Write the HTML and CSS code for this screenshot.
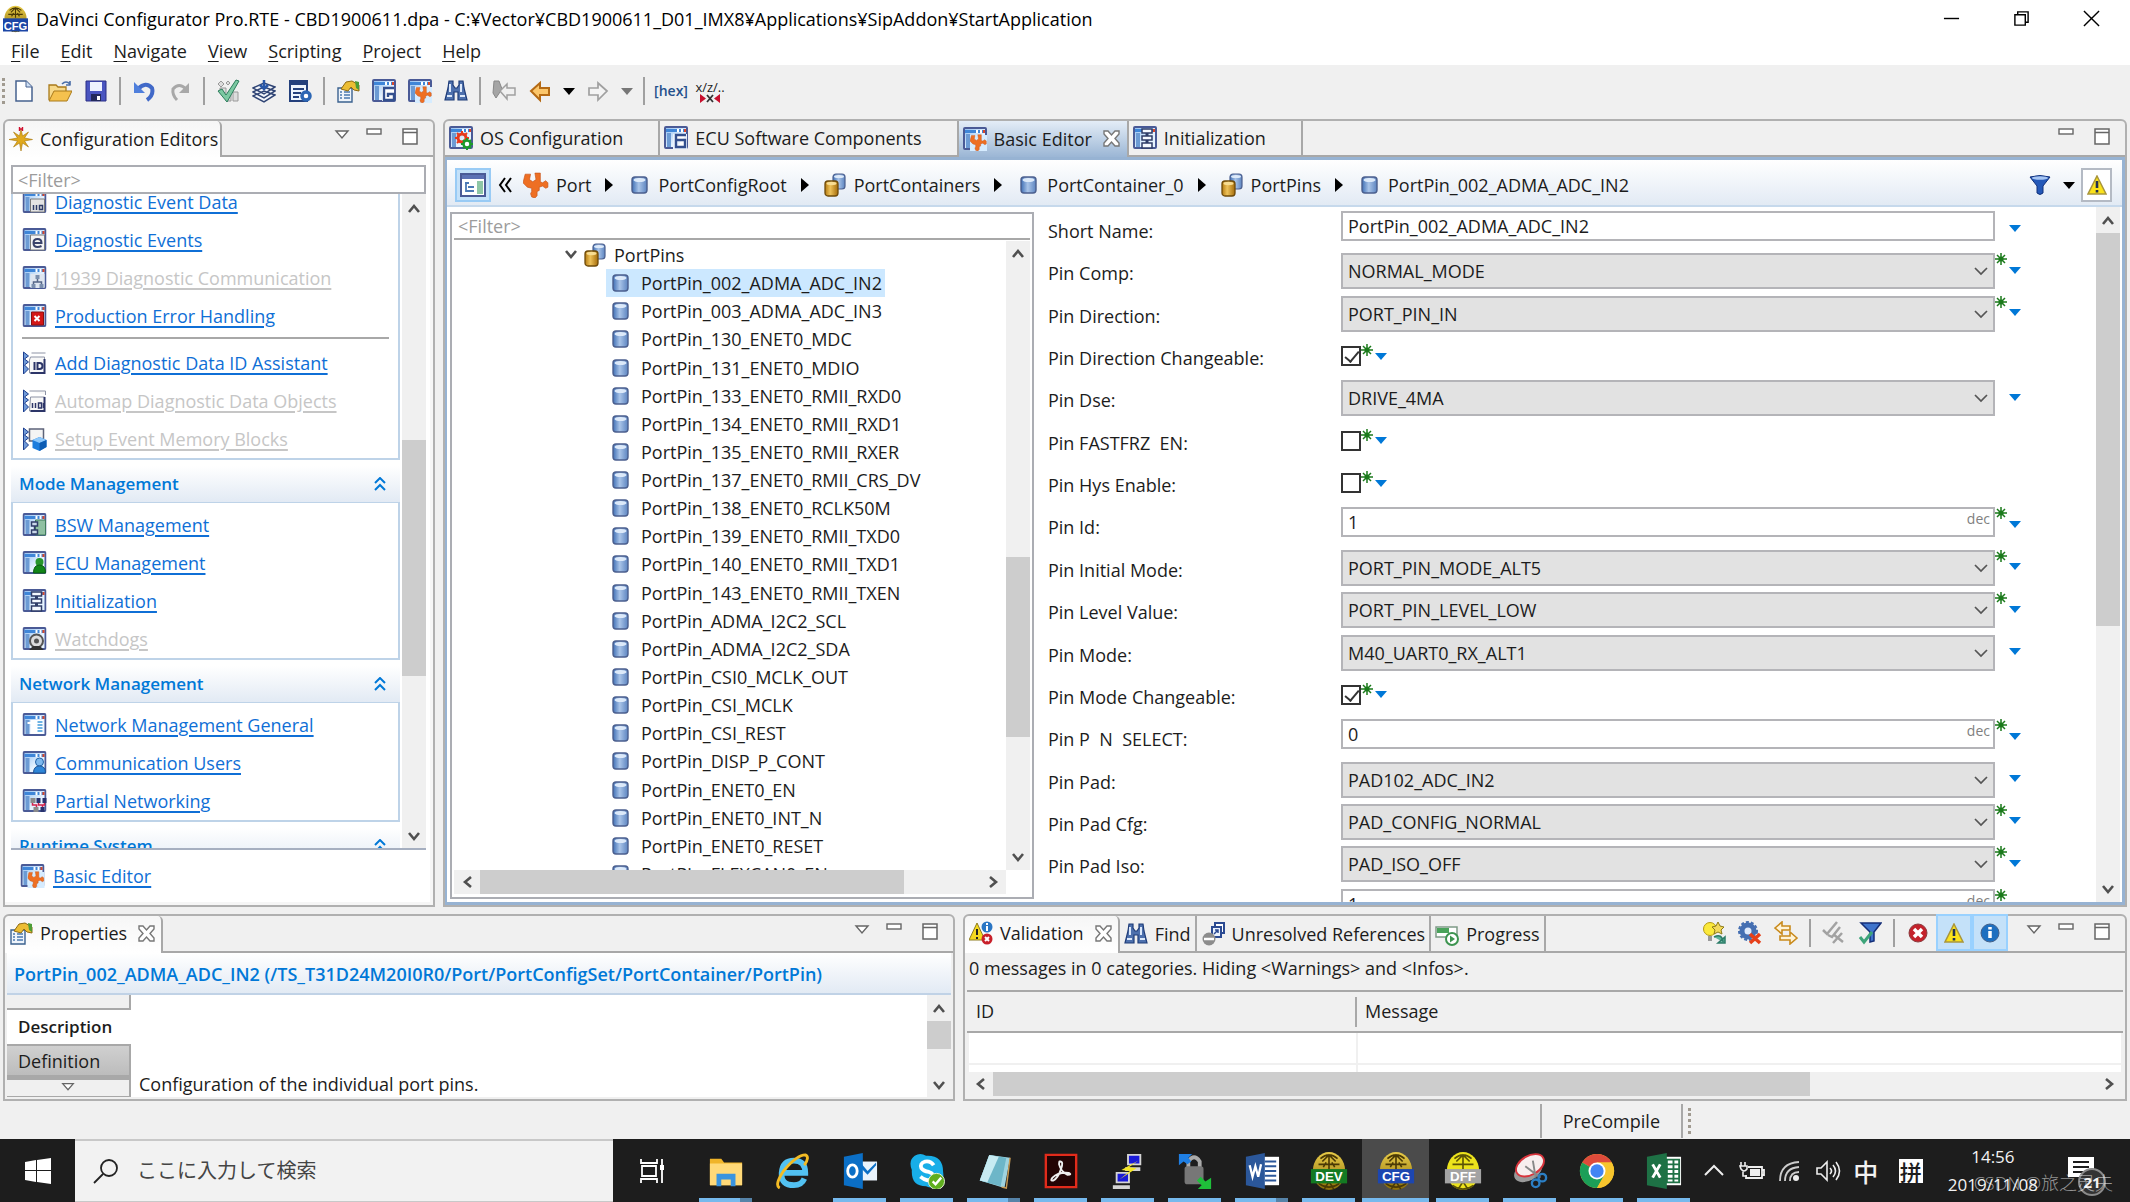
FILE: index.html
```html
<!DOCTYPE html>
<html lang="en">
<head>
    <meta charset="UTF-8">
    <meta name="viewport" content="width=device-width, initial-scale=1.0">
    <title>DaVinci Configurator Pro.RTE - CBD1900611.dpa</title>
    <link rel="stylesheet" href="styles.css">
</head>
<body>
    <!-- Icon sprite -->
    <svg class="sprite" aria-hidden="true">
        <defs>
            <linearGradient id="gBlue" x1="0" x2="1" y1="0" y2="0"><stop offset="0" stop-color="#3f6fb5"/><stop offset="0.45" stop-color="#a9c4e8"/><stop offset="1" stop-color="#5c84c0"/></linearGradient>
            <linearGradient id="gGold" x1="0" x2="1" y1="0" y2="0"><stop offset="0" stop-color="#b47a10"/><stop offset="0.4" stop-color="#eec25a"/><stop offset="1" stop-color="#a56c0a"/></linearGradient>
            <linearGradient id="gWin" x1="0" x2="1" y1="0" y2="1"><stop offset="0" stop-color="#8fbdf0"/><stop offset="0.6" stop-color="#e6f3ff"/></linearGradient>
            <linearGradient id="gDome" x1="0" x2="0" y1="0" y2="1"><stop offset="0" stop-color="#e8cb48"/><stop offset="1" stop-color="#8a6d08"/></linearGradient>
        </defs>
        <symbol id="win" viewBox="0 0 24 24"><rect x="1" y="1" width="22" height="21" rx="1" fill="url(#gWin)" stroke="#4a5a96" stroke-width="2"/><path d="M2 3h20v3H2z" fill="#3f86d8"/><path d="M13 3h2v3h-2zM17 3h2v3h-2z" fill="#fff"/><path d="M20 3h2v3h-2z" fill="#d9482b"/><path d="M3 7h4v14H3z" fill="#6c9bd4"/></symbol>
        <symbol id="i-os" viewBox="0 0 24 24"><use href="#win"/><circle cx="13" cy="12" r="4" fill="none" stroke="#e8391c" stroke-width="3"/><path d="M13 5v3M13 16v3M6 12h3M17 12h3M8 7l2 2M18 7l-2 2M8 17l2-2" stroke="#e8391c" stroke-width="2"/><circle cx="18" cy="18" r="3.500" fill="#fff" stroke="#1c9a2a" stroke-width="2.500"/><path d="M18 12v2M18 22v2M12 18h2M22 18h2M14 14l2 2M22 14l-2 2M14 22l2-2M22 22l-2-2" stroke="#1c9a2a" stroke-width="2"/></symbol>
        <symbol id="i-ecu" viewBox="0 0 24 24"><use href="#win"/><path d="M9 8h14v15H9z" fill="#eaf3fd"/><path d="M22 9h-10v13M12 14h9v7h-9z" fill="#fff" stroke="#34508e" stroke-width="2.400"/></symbol>
        <symbol id="puzzle" viewBox="0 0 24 24"><path d="M2 2h5l-1 5 3 2 3-2-1-6h5v8l2 1 3-2 2 2v4l-2 1-3-2-3 1v3l-2 1v4l-2 2-3-1-1-3 1-2v-3l-4-1-4-4z" fill="#ee6f23" stroke="#c6541a" stroke-width="0.600"/></symbol>
        <symbol id="i-basic" viewBox="0 0 24 24"><use href="#win"/><path d="M7 8h17v16H7z" fill="#d6ecff"/><svg x="7" y="7" width="17" height="17"><use href="#puzzle"/></svg></symbol>
        <symbol id="i-init" viewBox="0 0 24 24"><use href="#win"/><path d="M9 3h10v4H9zM9 10h10v4H9zM9 17h10v5H9z" fill="#f5f9ff" stroke="#2f3d68" stroke-width="1.500"/><path d="M14 7v3M14 14v3" stroke="#2f3d68" stroke-width="3"/></symbol>
        <symbol id="i-data" viewBox="0 0 24 24"><use href="#win"/><path d="M8 9h14v13H8z" fill="#e4e4e4" stroke="#7a7a7a"/><path d="M11 15v5M14 15v5M17 15.500h3v4h-3z" fill="none" stroke="#2f3d68" stroke-width="1.500"/></symbol>
        <symbol id="i-event" viewBox="0 0 24 24"><use href="#win"/><path d="M8 7h14v15H8z" fill="#f4f4f4" stroke="#7a7a7a"/><path d="M11 15h8q0-4-4-4t-4 4 4 4q2 0 4-1" fill="none" stroke="#39426a" stroke-width="2"/></symbol>
        <symbol id="i-comm" viewBox="0 0 24 24"><use href="#win"/><path d="M8 8h14v14H8z" fill="#dfe6f0"/><path d="M13 9h4v4h-4zM9 18h4v4H9zM17 18h4v4h-4z" fill="#7b8fae"/><path d="M15 13v3M11 18v-2h8v2" fill="none" stroke="#556687" stroke-width="1.500"/></symbol>
        <symbol id="i-error" viewBox="0 0 24 24"><use href="#win"/><path d="M9 8h12v13H9z" fill="#d41616" stroke="#8c1010"/><path d="M12 12l5 5M17 12l-5 5" stroke="#fff" stroke-width="2"/></symbol>
        <symbol id="i-assist" viewBox="0 0 24 24"><path d="M9 2h14M8 6h14v16H7V9z" fill="#f8f8f8" stroke="#8d93a5"/><path d="M22 8v14H8" fill="none" stroke="#2c3568" stroke-width="2"/><path d="M1 1l5 4-4 3 4 3-4 3 4 4-5 5z" fill="#6f9ad8" stroke="#1d3f8f"/><path d="M12 11v8M15 12h2q3 0 3 3t-3 3h-2z" fill="none" stroke="#2c3568" stroke-width="2"/></symbol>
        <symbol id="i-automap" viewBox="0 0 24 24"><path d="M7 2h16v4M8 8h14v14H7z" fill="#f8f8f8" stroke="#8d93a5"/><path d="M22 8v14H8" fill="none" stroke="#2c3568" stroke-width="2"/><path d="M1 1l5 4-4 3 4 3-4 3 4 4-5 5z" fill="#6f9ad8" stroke="#1d3f8f"/><path d="M10 14v5M13 14v5M16 14h3v5h-3zM21 14v5" fill="none" stroke="#2c3568" stroke-width="1.500"/></symbol>
        <symbol id="i-blocks" viewBox="0 0 24 24"><path d="M7 2h14v12H7z" fill="#f4f4f4" stroke="#5d6379" stroke-width="1.500"/><path d="M1 1l5 4-4 3 4 3-4 3 4 4-5 5z" fill="#6f9ad8" stroke="#1d3f8f"/><path d="M10 13l7-3 7 3v7l-7 4-7-3z" fill="#1d7ddd"/><path d="M10 13l7 3 7-3-7-3z" fill="#8ec8fb"/><path d="M17 16v8l7-4v-7z" fill="#0c5cb4"/></symbol>
        <symbol id="i-bsw" viewBox="0 0 24 24"><use href="#win"/><path d="M13 7h10v15H13z" fill="#8fc0a2" stroke="#3f7a5a"/><path d="M9 9h6v4H9zM9 17h6v4H9zM12 13v4" fill="#c9d7e8" stroke="#2f3d68" stroke-width="1.500"/></symbol>
        <symbol id="i-user-g" viewBox="0 0 24 24"><use href="#win"/><circle cx="17" cy="11" r="4" fill="#27962c"/><path d="M11 22q0-8 6-8t6 8z" fill="#128618" stroke="#0b5c10"/></symbol>
        <symbol id="i-user-b" viewBox="0 0 24 24"><use href="#win"/><circle cx="17" cy="11" r="4" fill="#7db8ee" stroke="#2363a8"/><path d="M11 22q0-7 6-7t6 7z" fill="#2f86d8" stroke="#1c5596"/></symbol>
        <symbol id="i-watch" viewBox="0 0 24 24"><use href="#win"/><circle cx="14" cy="14" r="6.500" fill="#ddd" stroke="#555" stroke-width="2"/><circle cx="14" cy="14" r="2.500" fill="#555"/><path d="M9 22l2-2h6l2 2z" stroke="#333" stroke-width="2"/></symbol>
        <symbol id="i-general" viewBox="0 0 24 24"><use href="#win"/><path d="M8 7h13v14H8z" fill="#fff"/><path d="M15 9h5M15 12h5M15 15h5M15 18h5" stroke="#3f9bdc" stroke-width="1.500"/><path d="M5 10h6" stroke="#fff" stroke-width="2"/></symbol>
        <symbol id="i-partial" viewBox="0 0 24 24"><use href="#win"/><path d="M8 9h5v5H8zM11 18h5v5h-5z" fill="#8a8a8a"/><path d="M14 9h4v5h-4zM20 9h4v5h-4zM18 18h4v5h-4z" fill="#28326e"/><path d="M10 14v2h4v2M16 14v2h6v-2M20 16v2" fill="none" stroke="#d3214a" stroke-width="1.500"/></symbol>
        <symbol id="i-star" viewBox="0 0 24 24"><path d="M12 2l1.500 7 6-4-4 6 8 1.500-8 1.500 4 6-6-4L12 24l-1.500-8-6 4 4-6L0 12.500l8.500-1.500-4-6 6 4z" fill="#e0a91c" stroke="#a87608" stroke-width="0.600"/><path d="M10.500 0v4M13.500 0v4M10 2h4" stroke="#d01030" stroke-width="1.400"/></symbol>
        <symbol id="cyl" viewBox="0 0 17 18"><rect x="1" y="1" width="15" height="16" rx="3" fill="url(#gBlue)" stroke="#4b5f8e" stroke-width="1.400"/><ellipse cx="8.500" cy="4" rx="6" ry="2" fill="#dce9f9"/></symbol>
        <symbol id="cyls" viewBox="0 0 22 24"><g transform="translate(8 0)"><rect x="1" y="1" width="12" height="15" rx="3" fill="url(#gBlue)" stroke="#4b5f8e" stroke-width="1.200"/><ellipse cx="7" cy="3.500" rx="5" ry="1.600" fill="#dce9f9"/></g><rect x="1" y="8" width="13" height="15" rx="3" fill="url(#gGold)" stroke="#6f4b0a" stroke-width="1.300"/><ellipse cx="7.500" cy="10.500" rx="5" ry="1.700" fill="#f7dc92"/></symbol>
        <symbol id="chev-d" viewBox="0 0 12 12"><path d="M1 2l5 6 5-6" fill="none" stroke="#505050" stroke-width="2.600"/></symbol>
        <symbol id="chev-u" viewBox="0 0 12 12"><path d="M1 10l5-6 5 6" fill="none" stroke="#505050" stroke-width="2.600"/></symbol>
        <symbol id="chev-l" viewBox="0 0 12 12"><path d="M10 1L4 6l6 5" fill="none" stroke="#505050" stroke-width="2.600"/></symbol>
        <symbol id="chev-r" viewBox="0 0 12 12"><path d="M2 1l6 5-6 5" fill="none" stroke="#505050" stroke-width="2.600"/></symbol>
        <symbol id="chev-thin" viewBox="0 0 14 9"><path d="M1 1l6 6 6-6" fill="none" stroke="#555" stroke-width="1.700"/></symbol>
        <symbol id="collapse" viewBox="0 0 12 14"><path d="M1 6l5-5 5 5M1 13l5-5 5 5" fill="none" stroke="#0078d7" stroke-width="2"/></symbol>
        <symbol id="tri" viewBox="0 0 12 7"><path d="M0 0h12L6 7z"/></symbol>
        <symbol id="tri-r" viewBox="0 0 8 14"><path d="M0 0l8 7-8 7z" fill="#000"/></symbol>
        <symbol id="mark" viewBox="0 0 12 12"><path d="M6 0v12M0 6h12M2 2l8 8M10 2l-8 8" stroke="#1b7a1b" stroke-width="1.500"/><circle cx="6" cy="6" r="2.500" fill="#1b7a1b"/></symbol>
        <symbol id="v-menu" viewBox="0 0 16 18"><path d="M2 4h12l-6 7z" fill="#fff" stroke="#666" stroke-width="1.400"/></symbol>
        <symbol id="v-min" viewBox="0 0 16 18"><rect x="1" y="2" width="14" height="5" fill="#fff" stroke="#666" stroke-width="1.400"/></symbol>
        <symbol id="v-max" viewBox="0 0 16 18"><path d="M1 2h14v15H1zM1 5.500h14" fill="#fff" stroke="#666" stroke-width="1.500"/></symbol>
        <symbol id="close" viewBox="0 0 17 17"><path d="M1 1h4l3.500 4L12 1h4v3l-4 4.500 4 4.500v3h-4l-3.500-4L5 16H1v-3l4-4.500L1 4z" fill="#fff" stroke="#777" stroke-width="1.400"/></symbol>
        <symbol id="warn" viewBox="0 0 20 20"><path d="M10 1l9 18H1z" fill="#fbe21a" stroke="#a9963c" stroke-width="1.500"/><path d="M10 6v7M10 15v2.500" stroke="#23314f" stroke-width="2.600"/></symbol>
        <symbol id="props" viewBox="0 0 24 24"><path d="M2 9h14v14H2z" fill="#eef4fb" stroke="#3b618f" stroke-width="1.400"/><path d="M4 13h2M8 13h6M4 16h2M8 16h6M4 19h2M8 19h6" stroke="#4a78b0" stroke-width="1.500"/><path d="M5 10l5-7 6-1 7 4v6l-5-1-3-3-3 4z" fill="#ecbd33" stroke="#8e6a13"/><path d="M19 2l4 1v8l-3-2z" fill="#4d9c35"/></symbol>
        <symbol id="binoc" viewBox="0 0 24 24"><path d="M5 2h4v4l2 3h2l2-3V2h4l1 7 3 12h-9v-8h-4v8H1L4 9z" fill="#4d70ad" stroke="#1f3c78" stroke-width="1.200"/><path d="M3 17h5M16 17h5M6 5v8M17 5v8" stroke="#dbe8fa" stroke-width="2"/></symbol>
        <symbol id="dome" viewBox="0 0 38 42"><ellipse cx="19" cy="21" rx="17" ry="20" fill="url(#gDome)"/><path d="M10 8q9-8 18 0M8 14h22M12 11l7-7 7 7M19 5v14M8 34q11 8 22 0M14 40l5-8 5 8M13 17l3-5M25 17l-3-5" fill="none" stroke="#4a3905" stroke-width="1.700"/></symbol>
    </svg>

    <header>
        <div class="titlebar">
            <svg class="app-icon" viewBox="0 0 38 42"><use href="#dome"/><rect y="20" width="38" height="20" fill="#1c46a6"/><text x="19" y="37" class="badge-text" text-anchor="middle">CFG</text></svg>
            <span>DaVinci Configurator Pro.RTE - CBD1900611.dpa - C:¥Vector¥CBD1900611_D01_IMX8¥Applications¥SipAddon¥StartApplication</span>
            <div class="win-buttons">
                <button aria-label="Minimize"><svg viewBox="0 0 18 18"><path d="M1 9h16" stroke="#000" stroke-width="1.500"/></svg></button>
                <button aria-label="Restore"><svg viewBox="0 0 18 18"><path d="M2 5h11v11H2zM5 5V2h11v11h-3" fill="none" stroke="#000" stroke-width="1.500"/></svg></button>
                <button aria-label="Close"><svg viewBox="0 0 18 18"><path d="M1 1l16 16M17 1L1 17" stroke="#000" stroke-width="1.500"/></svg></button>
            </div>
        </div>
        <nav class="menubar">
            <button><u>F</u>ile</button>
            <button><u>E</u>dit</button>
            <button><u>N</u>avigate</button>
            <button><u>V</u>iew</button>
            <button><u>S</u>cripting</button>
            <button><u>P</u>roject</button>
            <button><u>H</u>elp</button>
        </nav>
    </header>

    <div class="toolbar">
        <span class="grip"></span>
        <button aria-label="New"><svg viewBox="0 0 24 24"><path d="M4 2h10l6 6v14H4z" fill="#fff" stroke="#46618f" stroke-width="1.500"/><path d="M14 2v6h6" fill="#cfe0f5" stroke="#46618f"/></svg></button>
        <button aria-label="Open"><svg viewBox="0 0 24 24"><path d="M1 21V6h7l2 2h8v4" fill="#f7d98a" stroke="#a97a1b" stroke-width="1.300"/><path d="M1 22l5-10h18l-5 10z" fill="#f5c14e" stroke="#a97a1b"/><path d="M14 5q4-4 8 0v-3m0 4h-4" fill="none" stroke="#4b6fa8" stroke-width="1.600"/></svg></button>
        <button aria-label="Save"><svg viewBox="0 0 24 24"><path d="M2 2h20v20H2z" fill="#4a55c0" stroke="#2b2f86"/><path d="M6 3h12v9H6z" fill="#eef2ff"/><path d="M7 15h10v7H7z" fill="#23295c"/><path d="M13 17h3v4h-3z" fill="#fff"/></svg></button>
        <span class="sep"></span>
        <button aria-label="Undo"><svg viewBox="0 0 24 24"><path d="M6 10q8-8 14-1 2 7-5 12" fill="none" stroke="#4169c8" stroke-width="4"/><path d="M2 3v11h11z" fill="#4f7fdc"/></svg></button>
        <button aria-label="Redo"><svg viewBox="0 0 24 24"><path d="M18 10q-7-7-13 0-1 6 4 11" fill="none" stroke="#a8a8a8" stroke-width="3"/><path d="M21 4v10H11z" fill="#a8a8a8"/></svg></button>
        <span class="sep"></span>
        <button aria-label="Validate"><svg viewBox="0 0 24 24"><path d="M5 2l3 3-3 3-3-3zM12 2l2 2-2 2-2-2zM4 9h6v5H4zM17 13h5v9h-5zM10 16h5v6h-5z" fill="#ddd" stroke="#999"/><path d="M2 12l4-2 4 6L20 1l3 1-12 21z" fill="#7cc9a2" stroke="#2c7c5b"/></svg></button>
        <button aria-label="Generate"><svg viewBox="0 0 24 24"><path d="M1 17l11-5 11 4-11 7zM1 13l11-5 11 4-11 7zM1 9l11-5 11 4-11 7z" fill="#f3f6fb" stroke="#2f4474" stroke-width="1.500"/><path d="M12 1v8m-4-3l4 4 4-4" fill="none" stroke="#2757a8" stroke-width="2.500"/></svg></button>
        <button aria-label="Options"><svg viewBox="0 0 24 24"><path d="M2 2h17v20H2z" fill="#eef4fc" stroke="#24407c" stroke-width="2"/><path d="M2 2h17v4H2z" fill="#24407c"/><path d="M5 10h11M5 14h8M5 18h6" stroke="#24407c" stroke-width="2"/><circle cx="18" cy="17" r="4" fill="#fff" stroke="#2c66b4" stroke-width="3.500"/></svg></button>
        <span class="sep"></span>
        <button aria-label="Properties"><svg><use href="#props"/></svg></button>
        <button aria-label="Configuration editor"><svg viewBox="0 0 24 24"><use href="#win"/><path d="M10 8h12v14H10z" fill="#fff"/><path d="M22 9H12v12h10v-6h-6v3" fill="none" stroke="#34508e" stroke-width="2.400"/></svg></button>
        <button aria-label="Basic editor"><svg><use href="#i-basic"/></svg></button>
        <button aria-label="Find"><svg><use href="#binoc"/></svg></button>
        <span class="sep"></span>
        <button aria-label="Last edit"><svg viewBox="0 0 24 24"><path d="M2 2h5l3 8-6 9-3-5z" fill="#a5a5a5" stroke="#888"/><path d="M8 12l7-7v4h8v7h-8v4z" fill="#f0f0f0" stroke="#a0a0a0" stroke-width="1.500"/></svg></button>
        <button aria-label="Back"><svg viewBox="0 0 24 24"><path d="M3 12l9-8v5h9v7h-9v5z" fill="#fbc66b" stroke="#b56a14" stroke-width="2"/></svg></button>
        <button class="drop" aria-label="Back history"><svg><use href="#tri"/></svg></button>
        <button aria-label="Forward"><svg viewBox="0 0 24 24"><path d="M21 12l-9-8v5H3v7h9v5z" fill="#f4f4f4" stroke="#a0a0a0" stroke-width="1.700"/></svg></button>
        <button class="drop dim" aria-label="Forward history"><svg><use href="#tri"/></svg></button>
        <span class="sep"></span>
        <button class="hex" aria-label="Hex">[hex]</button>
        <button class="xyz" aria-label="Short paths"><span>x/z/..</span><svg viewBox="0 0 20 9"><path d="M0 0l6 4.500L0 9zM20 0l-6 4.500 6 4.500z" fill="#c8102e"/><path d="M7 1l6 7M13 1L7 8" stroke="#333" stroke-width="1.800"/></svg></button>
    </div>

    <main class="workbench">
        <section class="pane editors">
            <div class="tabbar">
                <div class="tab active"><svg><use href="#i-star"/></svg>Configuration Editors</div>
                <div class="view-tools">
                    <button class="vm" aria-label="View menu"><svg><use href="#v-menu"/></svg></button>
                    <button aria-label="Minimize"><svg><use href="#v-min"/></svg></button>
                    <button aria-label="Maximize"><svg><use href="#v-max"/></svg></button>
                </div>
            </div>
            <div class="editors-body">
                <input class="filter" type="text" placeholder="&lt;Filter&gt;" aria-label="Filter editors">
                <div class="scroller">
                    <div class="groups">
                        <div class="group first">
                            <a href="#"><svg><use href="#i-data"/></svg><span>Diagnostic Event Data</span></a>
                            <a href="#"><svg><use href="#i-event"/></svg><span>Diagnostic Events</span></a>
                            <a href="#" class="off"><svg><use href="#i-comm"/></svg><span>J1939 Diagnostic Communication</span></a>
                            <a href="#"><svg><use href="#i-error"/></svg><span>Production Error Handling</span></a>
                            <hr>
                            <a href="#"><svg><use href="#i-assist"/></svg><span>Add Diagnostic Data ID Assistant</span></a>
                            <a href="#" class="off"><svg><use href="#i-automap"/></svg><span>Automap Diagnostic Data Objects</span></a>
                            <a href="#" class="off"><svg><use href="#i-blocks"/></svg><span>Setup Event Memory Blocks</span></a>
                        </div>
                        <h2>Mode Management<svg><use href="#collapse"/></svg></h2>
                        <div class="group">
                            <a href="#"><svg><use href="#i-bsw"/></svg><span>BSW Management</span></a>
                            <a href="#"><svg><use href="#i-user-g"/></svg><span>ECU Management</span></a>
                            <a href="#"><svg><use href="#i-init"/></svg><span>Initialization</span></a>
                            <a href="#" class="off"><svg><use href="#i-watch"/></svg><span>Watchdogs</span></a>
                        </div>
                        <h2>Network Management<svg><use href="#collapse"/></svg></h2>
                        <div class="group">
                            <a href="#"><svg><use href="#i-general"/></svg><span>Network Management General</span></a>
                            <a href="#"><svg><use href="#i-user-b"/></svg><span>Communication Users</span></a>
                            <a href="#"><svg><use href="#i-partial"/></svg><span>Partial Networking</span></a>
                        </div>
                        <h2>Runtime System<svg><use href="#collapse"/></svg></h2>
                    </div>
                    <div class="sb-v sb-editors"><svg><use href="#chev-u"/></svg><i></i><svg><use href="#chev-d"/></svg></div>
                </div>
                <a href="#" class="basic-link"><svg><use href="#i-basic"/></svg><span>Basic Editor</span></a>
            </div>
        </section>

        <section class="pane editor">
            <div class="tabbar">
                <div class="tab spare"><svg><use href="#i-os"/></svg>OS Configuration</div>
                <div class="tab spare"><svg><use href="#i-ecu"/></svg>ECU Software Components</div>
                <div class="tab current"><svg><use href="#i-basic"/></svg>Basic Editor<button aria-label="Close tab"><svg><use href="#close"/></svg></button></div>
                <div class="tab spare"><svg><use href="#i-init"/></svg>Initialization</div>
                <div class="view-tools">
                    <button aria-label="Minimize"><svg><use href="#v-min"/></svg></button>
                    <button aria-label="Maximize"><svg><use href="#v-max"/></svg></button>
                </div>
            </div>
            <div class="editor-body">
                <div class="crumbs">
                    <button class="toggle" aria-label="Show tree"><svg viewBox="0 0 26 24"><rect x="1" y="1" width="24" height="22" fill="#fff" stroke="#4a5a96" stroke-width="2"/><path d="M2 2h22v4H2z" fill="#5c71b4"/><path d="M17 8h6v13h-6z" fill="#8fc7a6"/><path d="M5 10h4M8 14h6M8 18h6M6 10v8h3" fill="none" stroke="#4b79b5" stroke-width="1.800"/></svg></button>
                    <svg class="back" viewBox="0 0 14 16"><path d="M7 1L2 8l5 7M13 1L8 8l5 7" fill="none" stroke="#000" stroke-width="2"/></svg>
                    <svg class="puzzle"><use href="#puzzle"/></svg><span>Port</span>
                    <svg class="arrow"><use href="#tri-r"/></svg><svg class="node"><use href="#cyl"/></svg><span>PortConfigRoot</span>
                    <svg class="arrow"><use href="#tri-r"/></svg><svg class="nodes"><use href="#cyls"/></svg><span>PortContainers</span>
                    <svg class="arrow"><use href="#tri-r"/></svg><svg class="node"><use href="#cyl"/></svg><span>PortContainer_0</span>
                    <svg class="arrow"><use href="#tri-r"/></svg><svg class="nodes"><use href="#cyls"/></svg><span>PortPins</span>
                    <svg class="arrow"><use href="#tri-r"/></svg><svg class="node"><use href="#cyl"/></svg><span>PortPin_002_ADMA_ADC_IN2</span>
                    <div class="crumb-tools">
                        <button aria-label="Filter"><svg class="funnel" viewBox="0 0 22 20"><path d="M1 2q10-3 20 0l-7 9v7q-3 3-6 0v-7z" fill="#2458b8" stroke="#12307a"/><ellipse cx="11" cy="3" rx="8" ry="1.800" fill="#a7c6f4"/></svg></button>
                        <button class="drop" aria-label="Filter menu"><svg><use href="#tri"/></svg></button>
                        <button class="warn-btn" aria-label="Warnings"><svg><use href="#warn"/></svg></button>
                    </div>
                </div>
                <div class="editor-split">
                    <div class="tree">
                        <input type="text" placeholder="&lt;Filter&gt;" aria-label="Filter tree">
                        <div class="tree-view">
                            <div class="tree-clip">
                                <ul>
                                    <li class="parent"><svg class="twisty"><use href="#chev-d"/></svg><svg class="nodes"><use href="#cyls"/></svg>PortPins</li>
                                    <li><span class="selected"><svg><use href="#cyl"/></svg>PortPin_002_ADMA_ADC_IN2</span></li>
                                    <li><span><svg><use href="#cyl"/></svg>PortPin_003_ADMA_ADC_IN3</span></li>
                                    <li><span><svg><use href="#cyl"/></svg>PortPin_130_ENET0_MDC</span></li>
                                    <li><span><svg><use href="#cyl"/></svg>PortPin_131_ENET0_MDIO</span></li>
                                    <li><span><svg><use href="#cyl"/></svg>PortPin_133_ENET0_RMII_RXD0</span></li>
                                    <li><span><svg><use href="#cyl"/></svg>PortPin_134_ENET0_RMII_RXD1</span></li>
                                    <li><span><svg><use href="#cyl"/></svg>PortPin_135_ENET0_RMII_RXER</span></li>
                                    <li><span><svg><use href="#cyl"/></svg>PortPin_137_ENET0_RMII_CRS_DV</span></li>
                                    <li><span><svg><use href="#cyl"/></svg>PortPin_138_ENET0_RCLK50M</span></li>
                                    <li><span><svg><use href="#cyl"/></svg>PortPin_139_ENET0_RMII_TXD0</span></li>
                                    <li><span><svg><use href="#cyl"/></svg>PortPin_140_ENET0_RMII_TXD1</span></li>
                                    <li><span><svg><use href="#cyl"/></svg>PortPin_143_ENET0_RMII_TXEN</span></li>
                                    <li><span><svg><use href="#cyl"/></svg>PortPin_ADMA_I2C2_SCL</span></li>
                                    <li><span><svg><use href="#cyl"/></svg>PortPin_ADMA_I2C2_SDA</span></li>
                                    <li><span><svg><use href="#cyl"/></svg>PortPin_CSI0_MCLK_OUT</span></li>
                                    <li><span><svg><use href="#cyl"/></svg>PortPin_CSI_MCLK</span></li>
                                    <li><span><svg><use href="#cyl"/></svg>PortPin_CSI_REST</span></li>
                                    <li><span><svg><use href="#cyl"/></svg>PortPin_DISP_P_CONT</span></li>
                                    <li><span><svg><use href="#cyl"/></svg>PortPin_ENET0_EN</span></li>
                                    <li><span><svg><use href="#cyl"/></svg>PortPin_ENET0_INT_N</span></li>
                                    <li><span><svg><use href="#cyl"/></svg>PortPin_ENET0_RESET</span></li>
                                    <li><span><svg><use href="#cyl"/></svg>PortPin_FLEXCAN0_EN</span></li>
                                </ul>
                            </div>
                            <div class="sb-v sb-tree"><svg><use href="#chev-u"/></svg><i></i><svg><use href="#chev-d"/></svg></div>
                        </div>
                        <div class="sb-h sb-tree-h"><svg><use href="#chev-l"/></svg><i></i><svg><use href="#chev-r"/></svg></div>
                    </div>
                    <div class="form-clip">
                        <form>
                            <div class="row"><label for="f0">Short Name:</label><div class="field"><input id="f0" type="text" value="PortPin_002_ADMA_ADC_IN2"></div><span class="mark"></span><button type="button" class="menu" aria-label="Menu"><svg><use href="#tri"/></svg></button></div>
                            <div class="row"><label for="f1">Pin Comp:</label><div class="field"><select id="f1"><option>NORMAL_MODE</option></select><svg class="caret"><use href="#chev-thin"/></svg></div><svg class="mark"><use href="#mark"/></svg><button type="button" class="menu" aria-label="Menu"><svg><use href="#tri"/></svg></button></div>
                            <div class="row"><label for="f2">Pin Direction:</label><div class="field"><select id="f2"><option>PORT_PIN_IN</option></select><svg class="caret"><use href="#chev-thin"/></svg></div><svg class="mark"><use href="#mark"/></svg><button type="button" class="menu" aria-label="Menu"><svg><use href="#tri"/></svg></button></div>
                            <div class="row check"><label for="f3">Pin Direction Changeable:</label><input id="f3" type="checkbox" checked><svg class="mark"><use href="#mark"/></svg><button type="button" class="menu" aria-label="Menu"><svg><use href="#tri"/></svg></button></div>
                            <div class="row"><label for="f4">Pin Dse:</label><div class="field"><select id="f4"><option>DRIVE_4MA</option></select><svg class="caret"><use href="#chev-thin"/></svg></div><span class="mark"></span><button type="button" class="menu" aria-label="Menu"><svg><use href="#tri"/></svg></button></div>
                            <div class="row check"><label for="f5">Pin FASTFRZ&nbsp; EN:</label><input id="f5" type="checkbox"><svg class="mark"><use href="#mark"/></svg><button type="button" class="menu" aria-label="Menu"><svg><use href="#tri"/></svg></button></div>
                            <div class="row check"><label for="f6">Pin Hys Enable:</label><input id="f6" type="checkbox"><svg class="mark"><use href="#mark"/></svg><button type="button" class="menu" aria-label="Menu"><svg><use href="#tri"/></svg></button></div>
                            <div class="row"><label for="f7">Pin Id:</label><div class="field"><input id="f7" type="text" value="1"><small>dec</small></div><svg class="mark"><use href="#mark"/></svg><button type="button" class="menu" aria-label="Menu"><svg><use href="#tri"/></svg></button></div>
                            <div class="row"><label for="f8">Pin Initial Mode:</label><div class="field"><select id="f8"><option>PORT_PIN_MODE_ALT5</option></select><svg class="caret"><use href="#chev-thin"/></svg></div><svg class="mark"><use href="#mark"/></svg><button type="button" class="menu" aria-label="Menu"><svg><use href="#tri"/></svg></button></div>
                            <div class="row"><label for="f9">Pin Level Value:</label><div class="field"><select id="f9"><option>PORT_PIN_LEVEL_LOW</option></select><svg class="caret"><use href="#chev-thin"/></svg></div><svg class="mark"><use href="#mark"/></svg><button type="button" class="menu" aria-label="Menu"><svg><use href="#tri"/></svg></button></div>
                            <div class="row"><label for="f10">Pin Mode:</label><div class="field"><select id="f10"><option>M40_UART0_RX_ALT1</option></select><svg class="caret"><use href="#chev-thin"/></svg></div><span class="mark"></span><button type="button" class="menu" aria-label="Menu"><svg><use href="#tri"/></svg></button></div>
                            <div class="row check"><label for="f11">Pin Mode Changeable:</label><input id="f11" type="checkbox" checked><svg class="mark"><use href="#mark"/></svg><button type="button" class="menu" aria-label="Menu"><svg><use href="#tri"/></svg></button></div>
                            <div class="row"><label for="f12">Pin P&nbsp; N&nbsp; SELECT:</label><div class="field"><input id="f12" type="text" value="0"><small>dec</small></div><svg class="mark"><use href="#mark"/></svg><button type="button" class="menu" aria-label="Menu"><svg><use href="#tri"/></svg></button></div>
                            <div class="row"><label for="f13">Pin Pad:</label><div class="field"><select id="f13"><option>PAD102_ADC_IN2</option></select><svg class="caret"><use href="#chev-thin"/></svg></div><span class="mark"></span><button type="button" class="menu" aria-label="Menu"><svg><use href="#tri"/></svg></button></div>
                            <div class="row"><label for="f14">Pin Pad Cfg:</label><div class="field"><select id="f14"><option>PAD_CONFIG_NORMAL</option></select><svg class="caret"><use href="#chev-thin"/></svg></div><svg class="mark"><use href="#mark"/></svg><button type="button" class="menu" aria-label="Menu"><svg><use href="#tri"/></svg></button></div>
                            <div class="row"><label for="f15">Pin Pad Iso:</label><div class="field"><select id="f15"><option>PAD_ISO_OFF</option></select><svg class="caret"><use href="#chev-thin"/></svg></div><svg class="mark"><use href="#mark"/></svg><button type="button" class="menu" aria-label="Menu"><svg><use href="#tri"/></svg></button></div>
                            <div class="row"><label for="f16">Pin Pow Ov:</label><div class="field"><input id="f16" type="text" value="1"><small>dec</small></div><svg class="mark"><use href="#mark"/></svg><button type="button" class="menu" aria-label="Menu"><svg><use href="#tri"/></svg></button></div>
                        </form>
                    </div>
                    <div class="sb-v sb-form"><svg><use href="#chev-u"/></svg><i></i><svg><use href="#chev-d"/></svg></div>
                </div>
            </div>
        </section>
    </main>

    <div class="views">
        <section class="pane properties">
            <div class="tabbar">
                <div class="tab active"><svg><use href="#props"/></svg>Properties<button aria-label="Close tab"><svg><use href="#close"/></svg></button></div>
                <div class="view-tools">
                    <button class="vm" aria-label="View menu"><svg><use href="#v-menu"/></svg></button>
                    <button aria-label="Minimize"><svg><use href="#v-min"/></svg></button>
                    <button aria-label="Maximize"><svg><use href="#v-max"/></svg></button>
                </div>
            </div>
            <h3>PortPin_002_ADMA_ADC_IN2 (/TS_T31D24M20I0R0/Port/PortConfigSet/PortContainer/PortPin)</h3>
            <div class="props-body">
                <div class="side-tabs">
                    <span class="stub"></span>
                    <button class="on">Description</button>
                    <button>Definition</button>
                    <button class="more" aria-label="More tabs"><svg><use href="#v-menu"/></svg></button>
                </div>
                <p>Configuration of the individual port pins.</p>
                <div class="sb-v sb-props"><svg><use href="#chev-u"/></svg><i></i><svg><use href="#chev-d"/></svg></div>
            </div>
        </section>

        <section class="pane validation">
            <div class="tabbar">
                <div class="tab active"><svg viewBox="0 0 24 24"><path d="M8 2l8 17H0z" fill="#f5d91e" stroke="#8d7c20"/><path d="M8 8v6M8 16v2" stroke="#222" stroke-width="2"/><circle cx="18" cy="6" r="5.500" fill="#2a76c4"/><path d="M18 5v5M18 2v2" stroke="#fff" stroke-width="2"/><circle cx="18" cy="18" r="5.500" fill="#c8202a"/><path d="M16 16l4 4M20 16l-4 4" stroke="#fff" stroke-width="2"/></svg>Validation<button aria-label="Close tab"><svg><use href="#close"/></svg></button></div>
                <div class="tab"><svg><use href="#binoc"/></svg>Find</div>
                <div class="tab"><svg viewBox="0 0 24 24"><path d="M14 1h9v10h-9z" fill="#fff" stroke="#2b4a92" stroke-width="2"/><path d="M11 5h9v10h-9z" fill="#eaf1fc" stroke="#2b4a92" stroke-width="2"/><path d="M13 12l4-4m0 3V8h-3" fill="none" stroke="#2b4a92" stroke-width="1.500"/><circle cx="8" cy="17" r="6.500" fill="#8c8c8c"/><path d="M3 17h10" stroke="#fff" stroke-width="2.500"/></svg>Unresolved References</div>
                <div class="tab"><svg viewBox="0 0 24 24"><path d="M1 5h21v10H1z" fill="#fff" stroke="#7d9a86" stroke-width="1.500"/><path d="M2 6h12v5H2z" fill="#4aa35b"/><circle cx="17" cy="17" r="6" fill="#fff" stroke="#3d9450" stroke-width="2"/><path d="M15 13.500l5 3.500-5 3.500z" fill="#3d9450"/></svg>Progress</div>
                <div class="view-tools actions">
                    <button class="act" aria-label="Solve"><svg viewBox="0 0 24 24"><circle cx="8" cy="8" r="6.500" fill="#fbe93b" stroke="#b59a12"/><path d="M6 15h4v5H6z" fill="#999"/><path d="M16 1l2 4 4 1-3 3 1 4-4-2-4 2 1-4-3-3 4-1z" fill="#f3d95a" stroke="#8c7a18"/><path d="M12 16q8-4 9 5m-5 1h7v-6z" fill="#5cb39a" stroke="#2c7c68" stroke-width="1.500"/></svg></button>
                    <button class="act" aria-label="Cancel solving"><svg viewBox="0 0 24 24"><circle cx="10" cy="10" r="6" fill="#dfeafb" stroke="#456fb2" stroke-width="5"/><circle cx="10" cy="10" r="9" fill="none" stroke="#456fb2" stroke-width="2" stroke-dasharray="3 2"/><path d="M12 13l10 9M22 13l-10 9" stroke="#e6401a" stroke-width="3.500"/></svg></button>
                    <button class="act" aria-label="Synchronize"><svg viewBox="0 0 24 24"><path d="M1 7l7-6v4h8v4H8v4z" fill="#fff3d6" stroke="#c98a1c" stroke-width="1.600"/><path d="M23 17l-7-6v4H6v4h10v4z" fill="#fff3d6" stroke="#c98a1c" stroke-width="1.600"/></svg></button>
                    <span class="sep"></span>
                    <button class="act" aria-label="Acknowledge"><svg viewBox="0 0 24 24"><path d="M1 9l4 4L15 1M6 14l4 2 8-10M11 13l10 8M20 12l-9 10" fill="none" stroke="#a2a2a2" stroke-width="2.500"/></svg></button>
                    <button class="act" aria-label="Filter by selection"><svg viewBox="0 0 24 24"><path d="M3 2h20l-7 9v9l-4 1V11z" fill="#3f74cc" stroke="#142e78" stroke-width="1.500"/><path d="M2 16l4 5 8-10" fill="none" stroke="#3da479" stroke-width="3"/></svg></button>
                    <span class="sep"></span>
                    <button class="act" aria-label="Errors"><svg viewBox="0 0 24 24"><circle cx="12" cy="12" r="9" fill="#c4222b" stroke="#8c3b3f"/><path d="M8 8l8 8M16 8l-8 8" stroke="#fff" stroke-width="3.500"/></svg></button>
                    <button class="act on" aria-label="Warnings"><svg viewBox="-2 -2 24 24"><use href="#warn" width="20" height="20"/></svg></button>
                    <button class="act on" aria-label="Infos"><svg viewBox="0 0 24 24"><circle cx="12" cy="12" r="9" fill="#1d6fc0" stroke="#44618a"/><path d="M12 10v7M12 6v2.500" stroke="#fff" stroke-width="3.500"/></svg></button>
                    <button class="vm" aria-label="View menu"><svg><use href="#v-menu"/></svg></button>
                    <button aria-label="Minimize"><svg><use href="#v-min"/></svg></button>
                    <button aria-label="Maximize"><svg><use href="#v-max"/></svg></button>
                </div>
            </div>
            <p class="summary">0 messages in 0 categories. Hiding &lt;Warnings&gt; and &lt;Infos&gt;.</p>
            <div class="table-clip">
                <table>
                    <thead><tr><th>ID</th><th>Message</th></tr></thead>
                    <tbody><tr><td></td><td></td></tr><tr><td></td><td></td></tr></tbody>
                </table>
            </div>
            <div class="sb-h sb-table"><svg><use href="#chev-l"/></svg><i></i><svg><use href="#chev-r"/></svg></div>
        </section>
    </div>

    <div class="statusbar">
        <span class="variant">PreCompile</span>
        <span class="grip"></span>
    </div>

    <footer class="taskbar">
        <button class="start" aria-label="Start"><svg viewBox="0 0 26 26"><path d="M0 4l11-2v10H0zM12 2l14-2v12H12zM0 13h11v11L0 22zM12 13h14v13l-14-2z" fill="#fff"/></svg></button>
        <label class="search"><svg viewBox="0 0 26 26"><circle cx="16" cy="10" r="8" fill="none" stroke="#222" stroke-width="1.800"/><path d="M10 16l-9 9" stroke="#222" stroke-width="1.800"/></svg><input type="text" lang="ja" placeholder="ここに入力して検索" aria-label="Search"></label>
        <button class="task-view" aria-label="Task view"><svg viewBox="0 0 26 26"><path d="M2 8h14v10H2zM1 1v4h16V1M1 25v-4h16v4M22 1v24" fill="none" stroke="#fff" stroke-width="1.800"/><path d="M20 7h4v5h-4z" fill="#fff"/></svg></button>
        <div class="apps">
            <button class="run many" aria-label="Explorer"><svg viewBox="0 0 38 38"><path d="M2 6h12l3 4h19v24H2z" fill="#f0b429"/><path d="M2 11h34v23H2z" fill="#ffd978"/><path d="M9 35V22h20v13h-5v-7H14v7z" fill="#3a94df"/></svg></button>
            <button aria-label="Internet Explorer"><svg viewBox="0 0 38 38"><path d="M8 21h24q0-13-12-13T7 21t13 13q8 0 11-7" fill="none" stroke="#52c1f2" stroke-width="6"/><path d="M5 37Q-1 34 9 19 23 2 32 2q5 2-1 11" fill="none" stroke="#f3bb24" stroke-width="3"/></svg></button>
            <button class="run" aria-label="Outlook"><svg viewBox="0 0 38 38"><path d="M20 9h17v20H20z" fill="#e9f3fc"/><path d="M21 12l6 7 9-9v3l-9 10-6-6z" fill="#0b6fc6"/><path d="M2 4l20-4v38L2 34z" fill="#0b6fc6"/><ellipse cx="11" cy="19" rx="5" ry="6.500" fill="none" stroke="#fff" stroke-width="3"/></svg></button>
            <button class="run" aria-label="Skype"><svg viewBox="0 0 38 38"><path d="M6 3q6-4 12 0 18-1 18 17 2 12-8 16-6 1-10-1Q2 35 3 18-1 8 6 3z" fill="#18aee8"/><path d="M26 13q-3-5-9-4-6 2-4 7 2 3 8 4 6 2 4 6-5 6-13-1" fill="none" stroke="#fff" stroke-width="4"/><circle cx="29" cy="30" r="8.500" fill="#5fae1e" stroke="#e8f4d8"/><path d="M25 30l3 3 6-7" fill="none" stroke="#fff" stroke-width="2.500"/></svg></button>
            <button class="run many" aria-label="Notepad"><svg viewBox="0 0 38 38"><path d="M14 2l22 3-6 32-26-8z" fill="#9fd3df"/><path d="M14 2l18 3-6 30-22-6z" fill="#6db6c8"/><path d="M14 2l10 2L12 31l-8-2z" fill="#c7ebf2"/><path d="M36 5l-4 32-5-1" fill="none" stroke="#c79a54" stroke-width="1.500"/></svg></button>
            <button class="run" aria-label="Acrobat"><svg viewBox="0 0 38 38"><path d="M3 2h32v34H3z" fill="#230404" stroke="#e32b1b" stroke-width="2.500"/><path d="M18 9q4 0 1 8-3 9-8 12-4 1-1-3 6-6 17-5 4 2-1 2-7-3-9-11 0-4 1-3z" fill="none" stroke="#eee" stroke-width="2"/></svg></button>
            <button class="run" aria-label="PuTTY"><svg viewBox="0 0 38 38"><path d="M18 1h15v12H18zM16 15h16v4H16zM6 20h15v12H6zM3 34h18v4H3z" fill="#d4d4d4"/><path d="M20 3h11v8H20zM8 22h11v8H8z" fill="#1a1ad8"/><path d="M30 8L12 18l9 1-11 9 18-12-8-1z" fill="#f5e625"/></svg></button>
            <button class="run" aria-label="Transfer lock"><svg viewBox="0 0 38 38"><path d="M12 16V9q6-9 12 0v7" fill="none" stroke="#aaa" stroke-width="4"/><rect x="8" y="14" width="20" height="19" rx="3" fill="#777"/><path d="M2 1h14l-4 4 3 4-4 3-4-3-5 4z" fill="#1f7fe4"/><path d="M36 38H22l4-4-5-5 4-4 5 5 6-4z" fill="#1fbf3a"/></svg></button>
            <button class="run many" aria-label="Word"><svg viewBox="0 0 38 38"><path d="M20 4h17v30H20z" fill="#fff"/><path d="M22 9h12M22 14h12M22 19h12M22 24h12M22 29h12" stroke="#2b579a" stroke-width="2"/><path d="M2 4l20-4v38L2 34z" fill="#2b579a"/><path d="M6 13l3 12 3-11 3 11 3-13" fill="none" stroke="#fff" stroke-width="2.400"/></svg></button>
            <button class="run davinci" aria-label="DaVinci Developer"><svg viewBox="0 0 38 42"><use href="#dome"/><rect y="19" width="38" height="15" fill="#137a22"/><text x="19" y="32" class="badge-text small" text-anchor="middle">DEV</text></svg></button>
            <button class="run davinci front" aria-label="DaVinci Configurator"><svg viewBox="0 0 38 42"><use href="#dome"/><rect y="19" width="38" height="15" fill="#1c46b0"/><text x="19" y="32" class="badge-text small" text-anchor="middle">CFG</text></svg></button>
            <button class="run davinci" aria-label="DaVinci Diff"><svg viewBox="0 0 38 42"><ellipse cx="19" cy="21" rx="17" ry="20" fill="#ece31c"/><path d="M10 8q9-8 18 0M8 14h22M12 11l7-7 7 7M19 5v14M8 36q11 8 22 0M14 40l5-8 5 8" fill="none" stroke="#5a5206" stroke-width="1.700"/><rect y="19" width="38" height="15" fill="#a3a3a3"/><text x="19" y="32" class="badge-text small" text-anchor="middle">DFF</text></svg></button>
            <button class="run" aria-label="Snipping Tool"><svg viewBox="0 0 38 38"><ellipse cx="17" cy="19" rx="16" ry="10" transform="rotate(-30 17 19)" fill="#9a9a9a"/><ellipse cx="19" cy="13" rx="16" ry="10" transform="rotate(-30 19 13)" fill="#f7eeee" stroke="#d8343c" stroke-width="2"/><path d="M22 8l3 18M14 14l16 12" stroke="#888" stroke-width="2"/><circle cx="25" cy="32" r="4" fill="none" stroke="#2b7fc4" stroke-width="2.500"/><circle cx="32" cy="26" r="4" fill="none" stroke="#2b7fc4" stroke-width="2.500"/></svg></button>
            <button class="run" aria-label="Chrome"><svg viewBox="0 0 38 38"><circle cx="19" cy="19" r="18" fill="#f7c52d"/><path d="M19 19L3.400 10A18 18 0 0 1 34.600 10H19z" fill="#de4b3b"/><path d="M3.400 10A18 18 0 0 0 19 37l8-14-8-4z" fill="#1c9f58"/><path d="M19 10h15.600L27 23z" fill="#f7c52d"/><path d="M34.600 10A18 18 0 0 1 19 37l8-14z" fill="#f7c52d"/><circle cx="19" cy="19" r="9" fill="#fff"/><circle cx="19" cy="19" r="7" fill="#4285f4"/></svg></button>
            <button class="run" aria-label="Excel"><svg viewBox="0 0 38 38"><path d="M20 4h17v30H20z" fill="#fff"/><path d="M22 7h13v24H22zM22 12h13M22 17h13M22 22h13M22 27h13M29 7v24" fill="none" stroke="#1e7145" stroke-width="2"/><path d="M1 4l21-4v38L1 34z" fill="#1e7145"/><path d="M7 12l8 14M15 12L7 26" stroke="#fff" stroke-width="3"/></svg></button>
        </div>
        <div class="tray">
            <svg viewBox="0 0 26 26"><path d="M4 17l9-9 9 9" fill="none" stroke="#eee" stroke-width="2"/></svg>
            <svg viewBox="0 0 26 26"><path d="M9 9h14v11H7v-3M23 12h2v5h-2" fill="none" stroke="#eee" stroke-width="1.800"/><path d="M11 11h10v7H11z" fill="#eee"/><path d="M2 4v4M6 4v4M1 8h7v3q-3 4-6 0zM4 12v6h4" fill="none" stroke="#eee" stroke-width="1.600"/></svg>
            <svg viewBox="0 0 26 26"><path d="M3 23Q3 5 22 4M8 23Q8 10 22 9M13 23q0-9 9-9" fill="none" stroke="#ccc" stroke-width="1.800"/><circle cx="19" cy="20" r="3" fill="#eee"/></svg>
            <svg viewBox="0 0 26 26"><path d="M2 10h4l6-6v18l-6-6H2zM15 10q3 3 0 6M18 7q5 6 0 12M21 4q7 9 0 18" fill="none" stroke="#eee" stroke-width="1.600"/></svg>
            <span class="ime">中</span>
            <span class="ime box">拼</span>
            <div class="clock"><span>14:56</span><span>2019/11/08</span></div>
            <button class="notify" aria-label="Notifications"><svg viewBox="0 0 26 28"><path d="M0 0h26v20h-9l-6 7v-7H0z" fill="#fff"/><path d="M5 5h16M5 10h16M5 15h10" stroke="#1d1d1d" stroke-width="2"/></svg><b>21</b></button>
        </div>
        <span class="watermark">CSDN @旅之灵夫</span>
    </footer>
</body>
</html>
```

FILE: styles.css
```css
* {
    box-sizing: border-box;
}

body {
    margin: 0;
    height: 100vh;
    display: flex;
    flex-direction: column;
    overflow: hidden;
    background-color: #f0f0f0;
    color: #1c1c1c;
    font-family: "Open Sans", "Noto Sans CJK JP", sans-serif;
    font-size: 18px;
    line-height: 24px;
}

button {
    font: inherit;
    color: inherit;
    background: none;
    border: none;
    padding: 0;
    display: flex;
    align-items: center;
    justify-content: center;
}

input,
select {
    font: inherit;
    color: inherit;
}

svg {
    flex: none;
    display: block;
}

.sprite {
    position: absolute;
    width: 0;
    height: 0;
}

.badge-text {
    font: bold 17px "Liberation Sans", sans-serif;
    fill: #fff;
}

.badge-text.small {
    font-size: 14px;
}

/* Title and menu */
header {
    background-color: #fff;
}

.titlebar {
    display: flex;
    align-items: center;
    height: 37px;
    padding-left: 3px;
    color: #000;
}

.app-icon {
    width: 25px;
    height: 28px;
    margin-right: 8px;
}

.win-buttons {
    display: flex;
    margin-left: auto;
    padding-right: 4px;
}

.win-buttons button {
    width: 70px;
    height: 32px;
}

.win-buttons svg {
    width: 17px;
    height: 17px;
}

.menubar {
    display: flex;
    gap: 21px;
    height: 28px;
    padding-left: 11px;
}

.menubar button {
    display: block;
    height: 28px;
}

.menubar u {
    text-underline-offset: 3px;
}

/* Toolbar */
.toolbar {
    display: flex;
    align-items: center;
    gap: 10px;
    height: 54px;
    padding-bottom: 2px;
}

.toolbar button svg {
    width: 24px;
    height: 24px;
}

.toolbar button {
    width: 26px;
    height: 26px;
}

.grip {
    width: 3px;
    height: 26px;
    border-left: 3px dotted #a09a90;
}

.toolbar .grip {
    margin-left: 2px;
    margin-right: -4px;
}

.sep {
    width: 2px;
    height: 28px;
    background-color: #a0a0a0;
}

.toolbar .drop,
.crumbs .drop {
    width: 12px;
}

.toolbar .drop svg,
.crumbs .drop svg {
    width: 12px;
    height: 7px;
}

.drop.dim {
    fill: #777;
}

.toolbar .hex {
    font-size: 14px;
    font-weight: 600;
    color: #24508c;
    width: 32px;
}

.toolbar .xyz {
    flex-direction: column;
    font-size: 13px;
    line-height: 14px;
}

.toolbar .xyz svg {
    width: 20px;
    height: 9px;
}

/* Panes */
.workbench {
    flex: 1;
    min-height: 0;
    display: flex;
    gap: 8px;
    padding: 0 3px;
}

.views {
    flex: none;
    display: flex;
    gap: 8px;
    height: 187px;
    margin-top: 7px;
    padding: 0 3px;
}

.pane {
    display: flex;
    flex-direction: column;
    min-width: 0;
    border: 2px solid #b0b0b0;
    border-radius: 6px 6px 0 0;
    background-color: #f0f0f0;
}

.tabbar {
    flex: none;
    display: flex;
    height: 36px;
    border-bottom: 2px solid #a8a8a8;
}

.tab {
    display: flex;
    align-items: center;
    gap: 7px;
    padding: 0 4px;
    border-right: 2px solid #a8a8a8;
    white-space: nowrap;
}

.tab svg {
    width: 24px;
    height: 24px;
}

.tab button svg {
    width: 17px;
    height: 17px;
}

.tab button {
    margin: 0 4px;
}

.tab.active {
    height: 38px;
    padding: 0 2px 3px 4px;
    background: linear-gradient(#f6f6f6, #fff);
    border-radius: 5px 5px 0 0;
}

.tab.spare {
    padding-right: 35px;
}

.tab.current {
    height: 38px;
    padding: 0 3px 3px 4px;
    background: linear-gradient(#e4edf7, #97b3d3);
}

.view-tools {
    display: flex;
    gap: 20px;
    margin-left: auto;
    padding: 6px 15px 0 0;
}

.view-tools svg {
    width: 16px;
    height: 18px;
}

.view-tools button {
    align-items: flex-start;
}

.view-tools .vm {
    margin-right: -4px;
}

/* Configuration editors */
.editors {
    flex: 0 0 432px;
}

.editors-body {
    flex: 1;
    min-height: 0;
    display: flex;
    flex-direction: column;
    padding: 8px 4px 0 6px;
    border: solid #f6f6f6;
    border-width: 0 3px 3px 0;
    background-color: #fff;
}

.filter {
    height: 29px;
    padding: 0 5px;
    border: 2px solid #abadb3;
    background-color: #fff;
}

input::placeholder {
    color: #9c9c9c;
    opacity: 1;
}

.scroller {
    flex: 1;
    min-height: 0;
    display: flex;
    gap: 2px;
    overflow: hidden;
    border-bottom: 2px solid #a6afc0;
}

.groups {
    flex: 1;
    overflow: hidden;
}

.group {
    padding: 3px 9px 0 9px;
    border: 2px solid #bed3e8;
    border-top-width: 1px;
}

.group.first {
    margin-top: -15px;
}

.group a,
.basic-link {
    display: flex;
    align-items: center;
    gap: 8px;
    height: 38px;
    color: #0f6fd6;
    text-decoration: none;
    white-space: nowrap;
}

.group a span,
.basic-link span {
    text-decoration: underline;
    text-decoration-thickness: 2px;
    text-underline-offset: 3px;
}

.group a.off {
    color: #c6c6c6;
}

.group svg,
.basic-link svg {
    width: 25px;
    height: 24px;
}

.group hr {
    height: 2px;
    margin: 2px 0 5px 0;
    border: none;
    background-color: #a8a8a8;
}

.groups h2 {
    display: flex;
    align-items: center;
    justify-content: space-between;
    height: 36px;
    margin: 6px 0 0 0;
    padding: 0 14px 0 8px;
    background: linear-gradient(#fff, #e2eaf4);
    color: #0078d7;
    font-size: 17px;
    font-weight: 600;
}

.groups h2 svg {
    width: 12px;
    height: 14px;
}

.basic-link {
    flex: none;
    height: 52px;
    padding-left: 9px;
}

/* Scroll bars */
.sb-v,
.sb-h {
    display: grid;
    flex: none;
    place-items: center;
    background-color: #f0f0f0;
}

.sb-v {
    width: 24px;
}

.sb-h {
    height: 24px;
}

.sb-v i,
.sb-h i {
    width: 100%;
    height: 100%;
    background-color: #cdcdcd;
}

.sb-v svg:last-child {
    grid-row: 5;
}

.sb-v i {
    grid-row: 3;
}

.sb-h svg:last-child {
    grid-column: 5;
}

.sb-h i {
    grid-column: 3;
}

.sb-v svg,
.sb-h svg {
    width: 12px;
    height: 12px;
}

.sb-editors {
    grid-template-rows: 28px 218fr 236fr 150fr 22px;
}

.sb-tree {
    grid-template-rows: 24px 291fr 180fr 109fr 24px;
}

.sb-tree-h {
    grid-template-columns: 26px 0 424fr 78fr 24px;
    margin-right: 24px;
}

.sb-form {
    grid-template-rows: 26px 0 393fr 252fr 24px;
    margin-right: 2px;
}

.sb-props {
    grid-template-rows: 26px 0 29fr 26fr 22px;
}

.sb-table {
    grid-template-columns: 26px 0 817fr 287fr 26px;
}

/* Editor area */
.editor {
    flex: 1;
}

.editor-body {
    flex: 1;
    min-height: 0;
    display: flex;
    flex-direction: column;
    border: 3px solid #97b3d3;
    border-left-width: 2px;
    background-color: #fff;
}

.crumbs {
    flex: none;
    display: flex;
    align-items: center;
    height: 47px;
    padding: 5px 10px 0 8px;
    border-bottom: 2px solid #c6d9ec;
    background: linear-gradient(#fff, #e2eaf4);
    white-space: nowrap;
}

.toggle {
    width: 36px;
    height: 34px;
    border: 2px solid #99cbf5;
    background-color: #c4e1f9;
}

.toggle svg {
    width: 26px;
    height: 24px;
}

.back {
    width: 14px;
    height: 16px;
    margin: 0 11px 0 7px;
}

.puzzle {
    width: 26px;
    height: 26px;
    margin-right: 7px;
}

.arrow {
    width: 8px;
    height: 14px;
    margin: 0 15px 0 14px;
}

.node {
    width: 17px;
    height: 18px;
    margin: 0 10px 0 3px;
}

.nodes {
    width: 22px;
    height: 24px;
    margin-right: 8px;
}

.crumb-tools {
    display: flex;
    align-items: center;
    margin-left: auto;
}

.funnel {
    width: 22px;
    height: 20px;
    margin-right: 12px;
}

.warn-btn {
    width: 31px;
    height: 34px;
    margin-left: 6px;
    border: 2px solid #b4bac4;
    background-color: #fff;
}

.warn-btn svg {
    width: 20px;
    height: 20px;
}

.editor-split {
    flex: 1;
    min-height: 0;
    display: flex;
}

.tree {
    flex: 0 0 584px;
    display: flex;
    flex-direction: column;
    margin: 5px 0 3px 3px;
    padding: 0 2px 3px 2px;
    border: 2px solid #abadb3;
}

.tree input {
    height: 26px;
    padding: 0 4px;
    border: none;
    border-bottom: 2px solid #a8a8a8;
}

.tree-view {
    flex: 1;
    min-height: 0;
    display: flex;
    padding-top: 1px;
}

.tree-clip {
    flex: 1;
    overflow: hidden;
}

.tree ul {
    display: grid;
    grid-auto-rows: 1fr;
    height: calc(100% + 18px);
    margin: 0;
    padding: 0;
    list-style: none;
}

.tree li {
    display: flex;
    min-height: 0;
    padding-left: 152px;
    white-space: nowrap;
}

.tree li.parent {
    align-items: center;
    padding-left: 110px;
}

.tree li span {
    display: flex;
    align-items: center;
    gap: 12px;
    padding: 0 3px 0 6px;
}

.tree li span svg {
    width: 17px;
    height: 18px;
}

.tree .selected {
    background-color: #cce8ff;
}

.twisty {
    width: 14px;
    height: 12px;
    margin-right: 6px;
}

/* Pin parameters */
.form-clip {
    flex: 1;
    overflow: hidden;
    padding: 0 75px 0 14px;
}

form {
    display: grid;
    grid-auto-rows: 1fr;
    height: calc(100% + 25px);
}

.row {
    display: grid;
    grid-template-columns: 293px 1fr 14px 12px;
    align-items: start;
    min-height: 0;
    padding-top: 4px;
}

.row.check {
    grid-template-columns: 293px 20px 14px 12px;
}

.row label {
    padding-top: 8px;
}

.field {
    position: relative;
}

.field input,
.field select {
    display: block;
    width: 100%;
    height: 36px;
    padding: 0 5px;
    border: 2px solid #b4b4b8;
    border-radius: 0;
    background-color: #e2e2e2;
    appearance: none;
}

.field input {
    height: 30px;
    background-color: #fff;
}

.caret {
    position: absolute;
    top: 14px;
    right: 7px;
    width: 14px;
    height: 9px;
}

.field small {
    position: absolute;
    top: 0;
    right: 5px;
    font-size: 14px;
    color: #808080;
}

.mark {
    width: 12px;
    height: 12px;
}

.menu {
    height: 34px;
}

.menu svg {
    width: 12px;
    height: 7px;
    fill: #0078d7;
}

.check input {
    position: relative;
    width: 20px;
    height: 20px;
    margin: 8px 0 0 0;
    border: 2px solid #333;
    background-color: #fff;
    appearance: none;
}

.check input:checked::after {
    content: "";
    position: absolute;
    top: 0;
    left: 5px;
    width: 6px;
    height: 12px;
    border: solid #333;
    border-width: 0 2px 2px 0;
    transform: rotate(40deg);
}

.check .mark {
    margin-top: 6px;
}

.check .menu {
    height: 36px;
}

/* Properties view */
.properties {
    flex: 0 0 952px;
}

.views .tabbar {
    height: 37px;
}

.views .tab.active {
    height: 37px;
}

.properties h3 {
    flex: none;
    height: 42px;
    margin: 0 2px;
    padding: 0 7px;
    border-bottom: 2px solid #c0d2e6;
    background: linear-gradient(#fff, #e2eaf4);
    color: #0078d7;
    font-size: 18px;
    font-weight: 600;
    line-height: 42px;
    white-space: nowrap;
}

.props-body {
    flex: 1;
    min-height: 0;
    display: flex;
    margin: 0 2px 2px 2px;
    background-color: #fff;
}

.side-tabs {
    flex: 0 0 124px;
    display: flex;
    flex-direction: column;
}

.stub {
    height: 16px;
    border: solid #a8a8a8;
    border-width: 0 2px 2px 0;
    background-color: #f0f0f0;
}

.side-tabs button {
    flex: none;
    justify-content: flex-start;
    height: 33px;
    padding-left: 11px;
    border: solid #a8a8a8;
    border-width: 2px 2px 2px 0;
    background: linear-gradient(#d0d0d0, #bcbcbc);
}

.side-tabs .on {
    height: 34px;
    border: none;
    background: #fff;
    font-size: 17px;
    font-weight: 600;
}

.side-tabs .more {
    flex: 1;
    justify-content: center;
    padding: 0;
    border-width: 3px 2px 1px 0;
    background: #f0f0f0;
}

.more svg {
    width: 16px;
    height: 16px;
}

.props-body p {
    flex: 1;
    align-self: flex-end;
    margin: 0;
    padding: 0 0 1px 8px;
}

/* Validation view */
.validation {
    flex: 1;
}

.actions {
    align-items: flex-start;
    gap: 4px;
    padding-top: 0;
}

.actions button {
    margin: 6px 0 0 16px;
}

.actions .act {
    align-items: center;
    width: 32px;
    height: 33px;
    margin: 0;
}

.actions .act svg {
    width: 24px;
    height: 24px;
}

.actions .sep {
    margin: 3px 3px 0 3px;
}

.actions .on {
    outline: 2px solid #99d1ff;
    background-color: #c4e1f9;
}

.summary {
    margin: 0;
    padding: 3px 4px 10px 4px;
}

.table-clip {
    flex: 1;
    min-height: 0;
    overflow: hidden;
    margin: 0 2px;
    border-top: 2px solid #a8a8a8;
}

table {
    width: 100%;
    table-layout: fixed;
    border-collapse: collapse;
}

th {
    height: 40px;
    padding: 0 8px 2px 8px;
    border-bottom: 2px solid #a8a8a8;
    background: linear-gradient(#a8a8a8, #a8a8a8) right center / 2px 30px no-repeat;
    font-weight: 400;
    text-align: left;
}

th:first-child {
    width: 389px;
}

th:last-child {
    background: none;
}

td {
    height: 32px;
    padding: 0;
    border: 2px solid #f0f0f0;
    border-top: none;
    background-color: #fff;
}

.sb-table {
    margin: 0 2px 3px 2px;
}

/* Status bar */
.statusbar {
    flex: none;
    display: flex;
    align-items: center;
    justify-content: flex-end;
    gap: 5px;
    height: 38px;
    padding: 2px 439px 0 0;
}

.variant {
    height: 34px;
    padding: 5px 21px;
    border: solid #a8a8a8;
    border-width: 0 2px;
}

/* Task bar */
.taskbar {
    position: relative;
    flex: none;
    display: flex;
    height: 63px;
    background-color: #1d1d1d;
    color: #f2f2f2;
}

.start {
    width: 75px;
}

.start svg {
    width: 26px;
    height: 26px;
}

.search {
    display: flex;
    align-items: center;
    gap: 18px;
    width: 538px;
    padding-left: 18px;
    border: solid #c8c8c8;
    border-width: 2px 0 1px 0;
    background-color: #f2f2f2;
}

.search svg {
    width: 26px;
    height: 26px;
}

.search input {
    flex: 1;
    min-width: 0;
    padding: 0;
    border: none;
    background: none;
    font-size: 20px;
}

.search input::placeholder {
    color: #444;
}

.task-view {
    width: 79px;
}

.task-view svg {
    width: 26px;
    height: 26px;
}

.apps {
    display: flex;
}

.apps button {
    position: relative;
    width: 67px;
}

.apps svg {
    width: 36px;
    height: 36px;
}

.apps .davinci svg {
    width: 38px;
    height: 40px;
}

.apps .run::after {
    content: "";
    position: absolute;
    bottom: 0;
    left: 7px;
    right: 7px;
    height: 4px;
    background-color: #76b9ed;
}

.apps .many::after {
    border-right: 12px solid #5683a8;
}

.apps .front {
    background-color: #4b4b4b;
}

.apps .front::after {
    left: 0;
    right: 0;
}

.tray {
    display: flex;
    align-items: center;
    gap: 12px;
    margin-left: auto;
    padding-right: 36px;
}

.tray > svg {
    width: 26px;
    height: 26px;
}

.ime {
    width: 26px;
    font-family: "Noto Sans CJK SC", sans-serif;
    font-size: 25px;
    font-weight: 500;
    text-align: center;
}

.ime.box {
    width: 24px;
    margin: 0 13px 0 8px;
    background-color: #fff;
    color: #1d1d1d;
    font-size: 22px;
}

.clock {
    display: flex;
    flex-direction: column;
    align-items: center;
    gap: 4px;
    font-size: 17px;
}

.notify {
    position: relative;
    margin-left: 18px;
}

.notify svg {
    width: 26px;
    height: 28px;
}

.notify b {
    position: absolute;
    top: 11px;
    left: 10px;
    width: 28px;
    height: 28px;
    border: 2px solid #8a8a8a;
    border-radius: 50%;
    background-color: #333;
    font-size: 15px;
    line-height: 24px;
    text-align: center;
}

.watermark {
    position: absolute;
    right: 17px;
    bottom: 7px;
    color: rgba(255, 255, 255, 0.55);
    font-family: "Open Sans", "Noto Sans CJK SC", sans-serif;
    font-weight: 300;
}
```
